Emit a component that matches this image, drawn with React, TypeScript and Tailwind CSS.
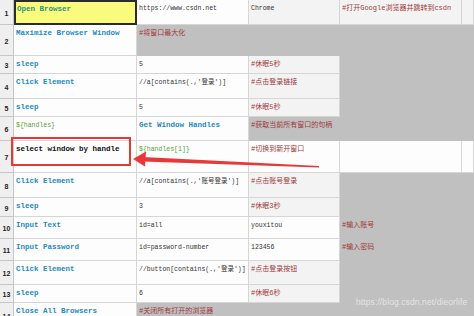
type Kind = 'kw' | 'kwSel' | 'plain' | 'var' | 'arg' | 'cmt' | 'none'
type Bg = 'w' | 'l' | 'g' | 'y'

interface Cell { text?: string; kind?: Kind; bg: Bg }
interface Row { h: string; cells: Cell[] }

const c = (text: string, kind: Kind, bg: Bg): Cell => ({ text, kind, bg })
const g: Cell = { bg: 'g' }
const l: Cell = { bg: 'l' }
const w: Cell = { bg: 'w' }

const rows: Row[] = [
  { h: 'h-[25px]', cells: [c('Open Browser', 'kwSel', 'y'), c('https://www.csdn.net', 'arg', 'w'), c('Chrome', 'arg', 'l'), c('#打开Google浏览器并跳转到csdn', 'cmt', 'l'), l] },
  { h: 'h-[31px]', cells: [c('Maximize Browser Window', 'kw', 'w'), c('#将窗口最大化', 'cmt', 'g'), g, g, g] },
  { h: 'h-[18px]', cells: [c('sleep', 'kw', 'w'), c('5', 'arg', 'w'), c('#休眠5秒', 'cmt', 'l'), g, g] },
  { h: 'h-[25px]', cells: [c('Click Element', 'kw', 'w'), c("//a[contains(.,'登录')]", 'arg', 'w'), c('#点击登录链接', 'cmt', 'l'), g, g] },
  { h: 'h-[18px]', cells: [c('sleep', 'kw', 'w'), c('5', 'arg', 'w'), c('#休眠5秒', 'cmt', 'l'), g, g] },
  { h: 'h-[24px]', cells: [c('${handles}', 'var', 'w'), c('Get Window Handles', 'kw', 'w'), c('#获取当前所有窗口的句柄', 'cmt', 'g'), g, g] },
  { h: 'h-[32px]', cells: [c('select window by handle', 'plain', 'w'), c('${handles[1]}', 'var', 'w'), c('#切换到新开窗口', 'cmt', 'w'), w, w] },
  { h: 'h-[25px]', cells: [c('Click Element', 'kw', 'w'), c("//a[contains(.,'账号登录')]", 'arg', 'w'), c('#点击账号登录', 'cmt', 'l'), g, g] },
  { h: 'h-[19px]', cells: [c('sleep', 'kw', 'w'), c('3', 'arg', 'w'), c('#休眠3秒', 'cmt', 'l'), g, g] },
  { h: 'h-[22px]', cells: [c('Input Text', 'kw', 'w'), c('id=all', 'arg', 'w'), c('youxitou', 'arg', 'w'), c('#输入账号', 'cmt', 'g'), g] },
  { h: 'h-[22px]', cells: [c('Input Password', 'kw', 'w'), c('id=password-number', 'arg', 'w'), c('123456', 'arg', 'w'), c('#输入密码', 'cmt', 'g'), g] },
  { h: 'h-[24px]', cells: [c('Click Element', 'kw', 'w'), c("//button[contains(.,'登录')]", 'arg', 'w'), c('#点击登录按钮', 'cmt', 'l'), g, g] },
  { h: 'h-[18px]', cells: [c('sleep', 'kw', 'w'), c('6', 'arg', 'w'), c('#休眠6秒', 'cmt', 'l'), g, g] },
  { h: 'h-[25px]', cells: [c('Close All Browsers', 'kw', 'w'), c('#关闭所有打开的浏览器', 'cmt', 'g'), g, g, g] },
]

const widths = ['w-[123px]', 'w-[112px]', 'w-[91px]', 'w-[122px]', 'flex-1']

const bgClass: Record<Bg, string> = {
  w: 'bg-[#fdfdfd] border-r border-b border-[#d6d6d6]',
  l: 'bg-[#f3f3f3] border-r border-b border-[#d6d6d6]',
  g: 'bg-[#c0c0c0] border-r border-b border-[#c0c0c0]',
  y: 'bg-[#fafa7c] border-2 border-[#2b2b2b]',
}

const textClass: Record<Kind, string> = {
  kw: 'text-[7.5px] font-bold text-[#1c8ac4]',
  kwSel: 'text-[7.5px] font-bold text-[#2a9481]',
  plain: 'text-[7.5px] font-bold text-[#111]',
  var: 'text-[6.5px] text-[#58a03a]',
  arg: 'text-[6.5px] text-[#333]',
  cmt: 'text-[7px] text-[#a0393b]',
  none: '',
}

export default function App() {
  return (
    <div className="relative w-[474px] h-[316px] overflow-hidden bg-[#c0c0c0] font-['Liberation_Mono','Noto_Sans_CJK_SC',monospace]">
      {rows.map((r, i) => (
        <div key={i} className={`flex ${r.h}`}>
          <div className="w-[14px] shrink-0 flex items-center justify-center pt-1 bg-[#efefef] border-r border-b border-[#c6c6c6] text-[7px] font-bold text-[#222] font-['Liberation_Sans',sans-serif]">
            {i + 1}
          </div>
          {r.cells.map((cell, j) => (
            <div
              key={j}
              className={`${widths[j]} shrink-0 overflow-hidden whitespace-nowrap leading-[9px] ${cell.bg === 'y' ? 'pl-[1px] pt-[1px]' : 'pl-[2px] pt-[2px]'} ${bgClass[cell.bg]}`}
            >
              {cell.text && <span className={textClass[cell.kind ?? 'none']}>{cell.text}</span>}
            </div>
          ))}
        </div>
      ))}

      {/* annotation box + arrow */}
      <div className="absolute left-[11px] top-[137px] w-[120px] h-[29px] border-2 border-[#e53935]" />
      <svg className="absolute inset-0 pointer-events-none" width="474" height="316" viewBox="0 0 474 316">
        <polygon points="143,157 143,161.5 319,167.5 319,166" fill="#e8383a" />
        <polygon points="133,159 146,151.5 145,166.5" fill="#e8383a" />
      </svg>

      <div className="absolute left-[356px] top-[296px] text-[8.5px] text-white/60 font-['Liberation_Sans',sans-serif] tracking-[0.1px]">
        https://blog.csdn.net/dieorlife
      </div>
    </div>
  )
}
